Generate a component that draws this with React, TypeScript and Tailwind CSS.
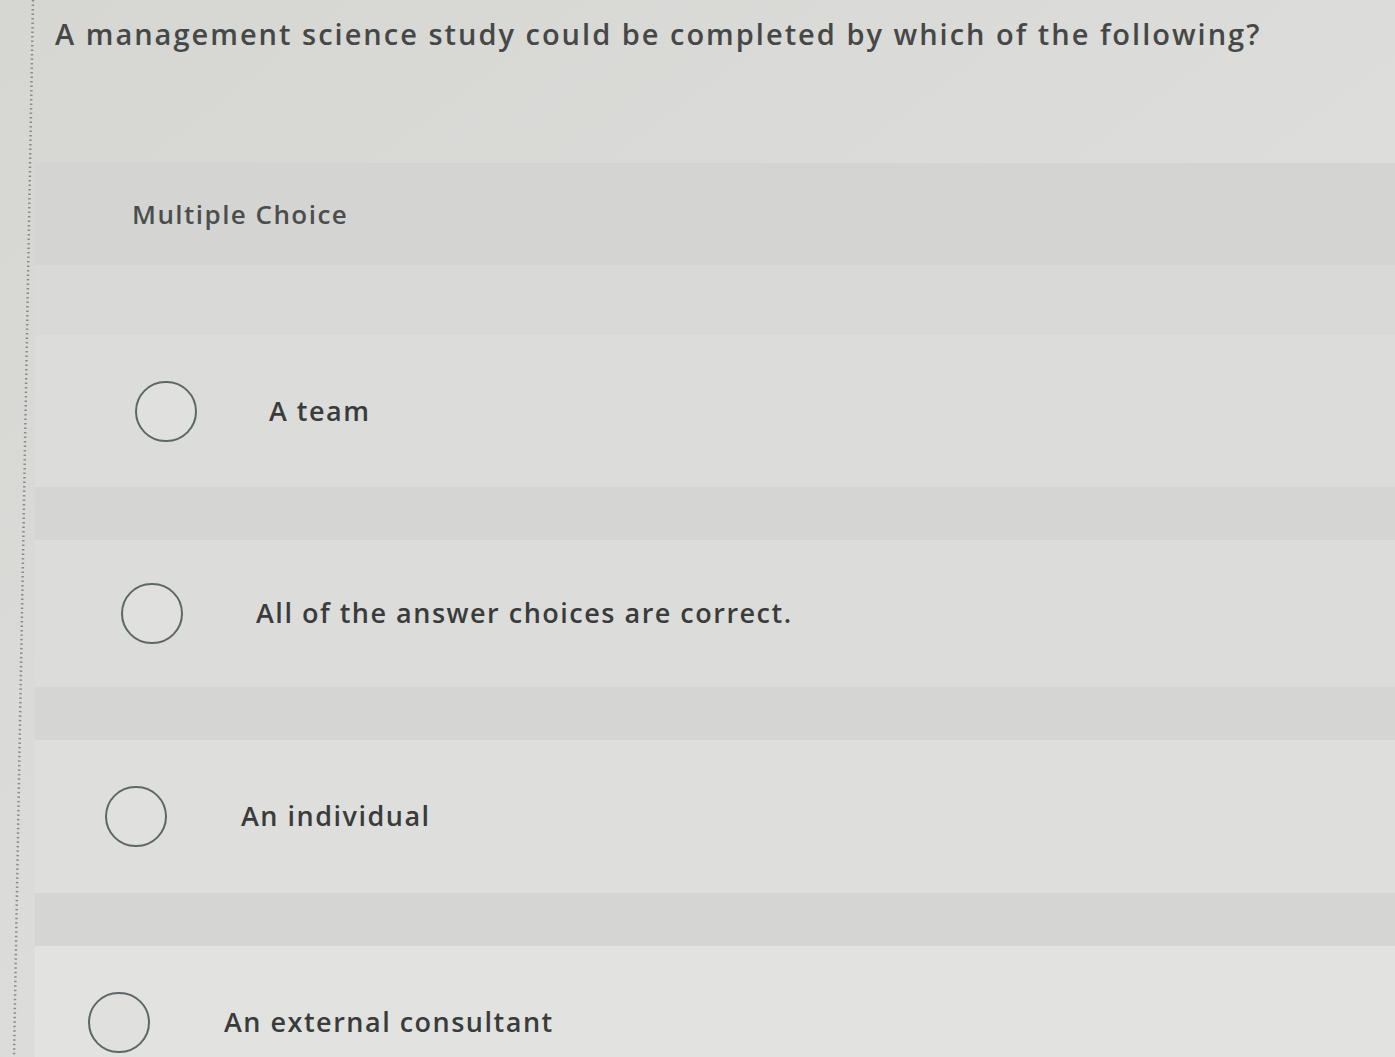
import React from 'react';

const options = [
  { label: 'A team', radio: 'ml-[100px]', text: 'ml-[72px]', h: 'h-[152px]', bg: 'bg-[#dcdddb]' },
  { label: 'All of the answer choices are correct.', radio: 'ml-[86px]', text: 'ml-[73px]', h: 'h-[147px]', bg: 'bg-[#dcdddb]' },
  { label: 'An individual', radio: 'ml-[70px]', text: 'ml-[74px]', h: 'h-[153px]', bg: 'bg-[#dedfdd]' },
  { label: 'An external consultant', radio: 'ml-[53px]', text: 'ml-[74px]', h: 'h-[152px]', bg: 'bg-[#e2e3e1]' },
];

const Radio = () => (
  <div className="w-[62px] h-[61px] rounded-full border-[2.5px] border-[#5d6766] bg-[#e0e1df] shrink-0" />
);

export default function App() {
  return (
    <div
      className="w-[1395px] h-[1057px] overflow-hidden flex bg-linear-to-br from-[#d6d6d3] via-[#dcdcda] to-[#e6e6e4] text-[#3b3d3d]"
      style={{ fontFamily: '"Open Sans", Lato, sans-serif' }}
    >
      {/* dotted page edge */}
      <div className="w-[35px] shrink-0">
        <svg width="35" height="1057" viewBox="0 0 35 1057">
          <line x1="33" y1="0" x2="14" y2="1057" stroke="#8a8c8b" strokeWidth="2.5" strokeDasharray="1.5 3" />
        </svg>
      </div>

      <div className="flex-1 flex flex-col">
        {/* Question */}
        <div className="h-[163px] shrink-0 pl-[20px] pt-[12px]">
          <h1 className="text-[29px] font-semibold tracking-[2px] text-[#464848] leading-[44px] whitespace-nowrap">
            A management science study could be completed by which of the following?
          </h1>
        </div>

        {/* Panel */}
        <div className="flex flex-col shrink-0 bg-[#d9dad8]">
          <div className="h-[102px] shrink-0 flex items-center pl-[97px] bg-[#d4d5d3]">
            <span className="text-[26px] font-semibold tracking-[1.45px] text-[#4c4e4e]">Multiple Choice</span>
          </div>
          <div className="h-[70px] shrink-0 bg-[#d9dad8]" />

          {options.map((o, i) => (
            <div key={o.label} className="flex flex-col shrink-0">
              <div className={`flex items-center ${o.h} ${o.bg}`}>
                <div className={o.radio}>
                  <Radio />
                </div>
                <span className={`${o.text} text-[27px] font-semibold tracking-[1.5px] text-[#3a3c3c] whitespace-nowrap`}>{o.label}</span>
              </div>
              {i < 3 && <div className="h-[53px] bg-[#d5d6d4]" />}
            </div>
          ))}
        </div>
      </div>
    </div>
  );
}
